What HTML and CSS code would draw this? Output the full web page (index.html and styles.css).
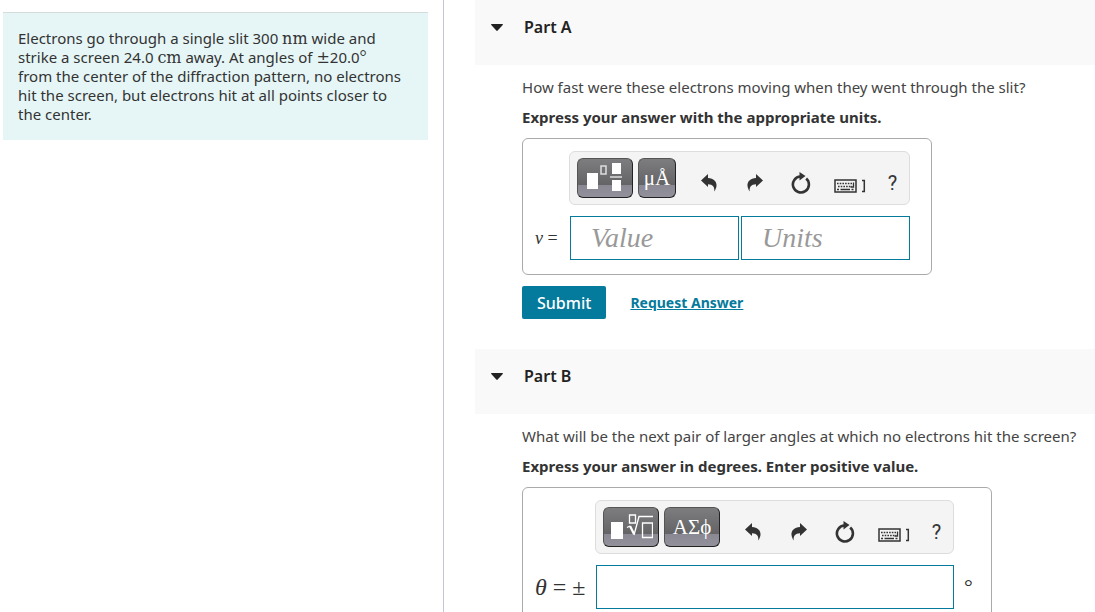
FILE: index.html
```html
<!DOCTYPE html>
<html lang="en">
<head>
  <meta charset="UTF-8">
  <meta name="viewport" content="width=device-width, initial-scale=1">
  <title>Single Slit Electrons</title>
  <link rel="stylesheet" href="styles.css">
</head>
<body>
  <!-- shared toolbar icons -->
  <svg class="sprite" aria-hidden="true">
    <symbol id="undo" viewBox="0 0 16 18">
      <path d="M0 6.5 7 0v4c5.500.3 9 3.500 8.500 8-.3 2-1 3.700-2.200 5.500.4-4.500-1.300-7-6.300-7.200V13z"/>
    </symbol>
    <symbol id="redo" viewBox="0 0 16 18">
      <path d="M16 6.500 9 0v4C3.500 4.300 0 7.500.500 12c.3 2 1 3.700 2.200 5.500-.4-4.500 1.300-7 6.300-7.200V13z"/>
    </symbol>
    <symbol id="reset" viewBox="0 0 20 22">
      <path d="M15.200 6.500A8 8 0 1 1 9.500 4.500" fill="none" stroke="currentColor" stroke-width="2.600"/>
      <path d="M8.500 0 14.500 4 8.500 8.500z"/>
    </symbol>
    <symbol id="keyboard" viewBox="0 0 32 14">
      <rect x="1" y="1" width="21" height="12" fill="none" stroke="currentColor" stroke-width="1.500"/>
      <path d="M3 4.500h15M4 7.500h14" fill="none" stroke="currentColor" stroke-width="1.600" stroke-dasharray="1.600 1.100"/>
      <path d="M19.500 3.500v4.500h-3" fill="none" stroke="currentColor" stroke-width="1.300"/>
      <path d="M3 10.500h2M6.500 10.500h9.500M17.500 10.500h2" fill="none" stroke="currentColor" stroke-width="1.500"/>
      <path d="M28 1.500h2.300v11H28" fill="none" stroke="currentColor" stroke-width="1.500"/>
    </symbol>
    <symbol id="caret" viewBox="0 0 12 7">
      <path d="M.5 0h11q.7.3.2 1L6.700 6.600q-.7.600-1.400 0L.3 1Q-.2.300.5 0z"/>
    </symbol>
  </svg>

  <div class="page">
    <aside class="intro">
      <p class="problem">Electrons go through a single slit 300 <span class="unit">nm</span> wide and strike a screen 24.0 <span class="unit">cm</span> away. At angles of <span class="sign">±</span>20.0<span class="deg">°</span><br>from the center of the diffraction pattern, no electrons hit the screen, but electrons hit at all points closer to the center.</p>
    </aside>

    <main class="parts">
      <section class="part">
        <h2 class="part-head">
          <button class="part-toggle" type="button" aria-expanded="true">
            <svg class="caret"><use href="#caret"/></svg>
            Part A
          </button>
        </h2>
        <form class="part-body">
          <p class="question">How fast were these electrons moving when they went through the slit?</p>
          <p class="hint">Express your answer with the appropriate units.</p>
          <div class="answer">
            <div class="toolbar">
              <button class="tool" type="button" aria-label="Templates">
                <svg width="38" height="32" viewBox="0 0 38 32">
                  <path d="M1 11h11v16H1zM26 1h9v11h-9zM26 18h9v11h-9z" fill="#fff"/>
                  <path d="M15 4h5v8h-5z" fill="none" stroke="#ddd" stroke-width="1.500"/>
                  <path d="M24 15h12" stroke="#ddd" stroke-width="1.500"/>
                </svg>
              </button>
              <button class="tool tool-small" type="button">μÅ</button>
              <div class="actions">
                <button class="action" type="button" aria-label="Undo"><svg width="16" height="18"><use href="#undo"/></svg></button>
                <button class="action" type="button" aria-label="Redo"><svg width="16" height="18"><use href="#redo"/></svg></button>
                <button class="action" type="button" aria-label="Reset"><svg width="20" height="22"><use href="#reset"/></svg></button>
                <button class="action action-wide" type="button" aria-label="Keyboard shortcuts"><svg width="32" height="14"><use href="#keyboard"/></svg></button>
                <button class="action action-help" type="button">?</button>
              </div>
            </div>
            <label class="var" for="value"><i>v</i> =</label>
            <div class="fields">
              <input class="field" id="value" type="text" placeholder="Value">
              <input class="field" type="text" placeholder="Units" aria-label="Units">
            </div>
          </div>
          <div class="buttons">
            <button class="submit" type="button">Submit</button>
            <a class="request" href="#">Request Answer</a>
          </div>
        </form>
      </section>

      <section class="part">
        <h2 class="part-head">
          <button class="part-toggle" type="button" aria-expanded="true">
            <svg class="caret"><use href="#caret"/></svg>
            Part B
          </button>
        </h2>
        <form class="part-body">
          <p class="question">What will be the next pair of larger angles at which no electrons hit the screen?</p>
          <p class="hint">Express your answer in degrees. Enter positive value.</p>
          <div class="answer answer-wide">
            <div class="toolbar">
              <button class="tool" type="button" aria-label="Templates">
                <svg width="44" height="32" viewBox="0 0 44 32">
                  <path d="M2 11h12v17H2z" fill="#fff"/>
                  <path d="M20.500 4h6v8h-6zM33.500 12h10v14.500h-10z" fill="none" stroke="#fff" stroke-width="1.300"/>
                  <path d="M18 16.500l3-1.500" fill="none" stroke="#fff" stroke-width="1.300"/>
                  <path d="M21 15l4 8" fill="none" stroke="#fff" stroke-width="2.300"/>
                  <path d="M25 24l5-18.500h14" fill="none" stroke="#fff" stroke-width="1.300"/>
                </svg>
              </button>
              <button class="tool" type="button">ΑΣϕ</button>
              <div class="actions">
                <button class="action" type="button" aria-label="Undo"><svg width="16" height="18"><use href="#undo"/></svg></button>
                <button class="action" type="button" aria-label="Redo"><svg width="16" height="18"><use href="#redo"/></svg></button>
                <button class="action" type="button" aria-label="Reset"><svg width="20" height="22"><use href="#reset"/></svg></button>
                <button class="action action-wide" type="button" aria-label="Keyboard shortcuts"><svg width="32" height="14"><use href="#keyboard"/></svg></button>
                <button class="action action-help" type="button">?</button>
              </div>
            </div>
            <label class="var var-large" for="theta"><i>θ</i> = ±</label>
            <div class="fields">
              <input class="field" id="theta" type="text">
            </div>
            <span class="suffix">°</span>
          </div>
        </form>
      </section>
    </main>
  </div>
</body>
</html>
```
FILE: styles.css
```css
* {
  box-sizing: border-box;
}

body {
  margin: 0;
  font-family: "Noto Sans", sans-serif;
  font-size: 15px;
  color: #333;
  background: #fff;
}

p, h2 {
  margin: 0;
}

button {
  font-family: inherit;
  border: 0;
  padding: 0;
  cursor: pointer;
}

.sprite {
  display: none;
}

.page {
  display: flex;
  height: 100vh;
  overflow: hidden;
}

/* left column */
.intro {
  flex: 0 0 40.55%;
  padding: 12px 15px 0 3px;
  border-right: 1px solid #c3c6d4;
}

.problem {
  padding: 16px 22px 16px 15px;
  line-height: 19px;
  background: #e6f6f7;
  border-top: 1px solid #d6dcdc;
}

.unit,
.sign {
  font-family: "DejaVu Serif", serif;
  font-size: 16px;
  line-height: 1;
}

.deg {
  font-family: "Liberation Serif", serif;
  font-size: 18px;
  line-height: 1;
}

/* right column */
.parts {
  flex: 1;
  min-width: 0;
  margin-left: 31px;
}

.part {
  margin-bottom: 30px;
}

.part-head {
  height: 65px;
  background: #f9f9f9;
}

.part-toggle {
  display: flex;
  align-items: center;
  gap: 21px;
  padding: 15px 16px;
  font-size: 16px;
  font-weight: 600;
  line-height: 24px;
  color: #222;
  background: none;
}

.caret {
  width: 12px;
  height: 7px;
  fill: #222;
}

.part-body {
  padding: 12px 0 0 47px;
}

.question {
  line-height: 20px;
  white-space: nowrap;
  color: #444;
}

.hint {
  margin: 10px 0 11px;
  line-height: 20px;
  font-weight: bold;
}

.answer {
  display: grid;
  grid-template-columns: 34px auto auto;
  row-gap: 11px;
  width: fit-content;
  padding: 12px 21px 14px 12px;
  border: 1px solid #aaa;
  border-radius: 6px;
}

.answer-wide {
  grid-template-columns: 60px auto auto;
  padding-right: 18px;
}

.toolbar {
  grid-column: 2;
  display: flex;
  gap: 5px;
  height: 54px;
  padding: 6px 0 6px 7px;
  background: #f4f4f4;
  border: 1px solid #ddd;
  border-radius: 6px;
}

.tool {
  display: flex;
  align-items: center;
  justify-content: center;
  width: 56px;
  height: 40px;
  font-family: "Liberation Serif", serif;
  font-size: 21px;
  color: #fff;
  background: linear-gradient(#7d7d7f, #646466 68%, #8a8893 68%, #92909b);
  border: 1px solid #555;
  border-right-color: #222;
  border-bottom-color: #222;
  border-radius: 6px;
}

.tool-small {
  width: 38px;
}

.actions {
  display: flex;
  padding: 10px 0 0 5px;
}

.action {
  display: flex;
  align-items: center;
  justify-content: center;
  width: 46px;
  color: #333;
  background: none;
}

.action svg {
  fill: currentColor;
}

.action-wide {
  width: 52px;
  padding-top: 5px;
}

.action-help {
  width: 33px;
  font-family: Roboto, sans-serif;
  font-size: 20px;
}

.var {
  grid-column: 1;
  align-self: center;
  font-family: "Liberation Serif", serif;
  font-size: 18px;
  white-space: nowrap;
}

.var-large {
  font-size: 24px;
}

.fields {
  grid-column: 2;
  display: flex;
  gap: 2px;
  padding-left: 1px;
}

.field {
  flex: 1;
  min-width: 0;
  width: 0;
  height: 44px;
  padding: 0 20px;
  font-family: "Liberation Serif", serif;
  font-size: 28px;
  border: 1px solid #047a9c;
}

.field::placeholder {
  font-style: italic;
  color: #999;
  opacity: 1;
}

.suffix {
  padding-left: 10px;
  align-self: center;
  font-family: "Liberation Serif", serif;
  font-size: 22px;
}

.buttons {
  display: flex;
  align-items: center;
  gap: 24px;
  margin-top: 11px;
}

.submit {
  height: 33px;
  padding: 0 15px;
  font-size: 16px;
  font-weight: 500;
  color: #fff;
  background: #047a9c;
  border-radius: 2px;
}

.request {
  font-size: 14px;
  font-weight: bold;
  color: #047a9c;
}
```
